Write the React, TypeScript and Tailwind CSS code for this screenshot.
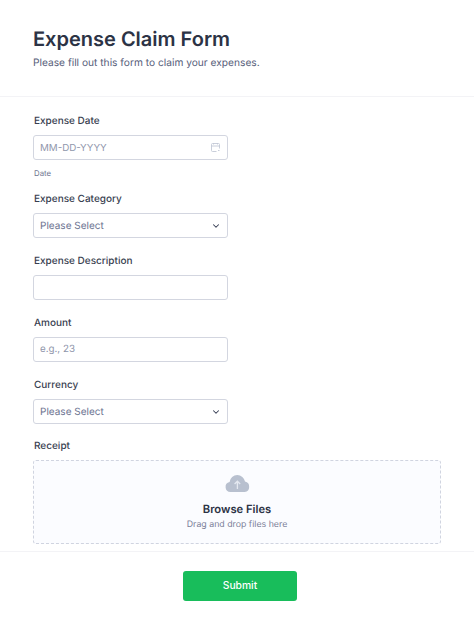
import { ChevronDown } from "lucide-react";

function Label({ text }: { text: string }) {
  return <p className="h-[18px] pl-px text-[10px] leading-[20px] font-medium text-[#383e50]">{text}</p>;
}

function Field({ text }: { text?: string }) {
  return (
    <div className="mt-[6px] flex h-[25px] w-[195px] items-center rounded-[3px] border border-[#d3d6e0] bg-white px-[6px] pt-[2px]">
      <span className="text-[9.8px] text-[#8f96ab]">{text}</span>
    </div>
  );
}

function SelectField() {
  return (
    <div className="mt-[6px] flex h-[25px] w-[195px] items-center justify-between rounded-[3px] border border-[#d3d6e0] bg-white pl-[6px] pr-[6px]">
      <span className="pt-[2px] text-[10px] text-[#6c7390]">Please Select</span>
      <ChevronDown className="h-[10px] w-[10px] text-[#343c52]" strokeWidth={2.5} />
    </div>
  );
}

export default function App() {
  return (
    <div className="h-[626px] w-[474px] overflow-hidden bg-white font-['Inter',sans-serif] [text-rendering:geometricPrecision]">
      <header className="h-[97px] border-b border-[#f3f3f6] pl-[33px] pt-[26px]">
        <h1 className="text-[20px] leading-[27px] font-semibold text-[#2c3345]">Expense Claim Form</h1>
        <p className="mt-[2px] text-[10.2px] leading-[16px] text-[#57607a]">Please fill out this form to claim your expenses.</p>
      </header>

      <main className="pl-[33px] pt-[14px]">
        <Label text="Expense Date" />
        <div className="mt-[6px] flex h-[25px] w-[195px] items-center justify-between rounded-[3px] border border-[#d3d6e0] bg-white pl-[6px] pr-[7px]">
          <span className="pt-[3px] text-[9.8px] text-[#8f96ab]">MM-DD-YYYY</span>
          <svg width="9" height="9" viewBox="0 0 9 9" fill="none" stroke="#c3c8d6" strokeWidth="0.9">
            <path d="M5.5 8.5H1.5a1 1 0 0 1-1-1V1.5a1 1 0 0 1 1-1h6a1 1 0 0 1 1 1V5.5" />
            <path d="M.5 3h8M2.5 0v1.5M6.5 0v1.5M7 7.5h1.5" />
          </svg>
        </div>
        <p className="mt-[7px] h-[12px] pl-px text-[7.8px] leading-[12px] text-[#6f7690]">Date</p>

        <div className="mt-[10px]">
          <Label text="Expense Category" />
          <SelectField />
        </div>

        <div className="mt-[13px]">
          <Label text="Expense Description" />
          <Field />
        </div>

        <div className="mt-[13px]">
          <Label text="Amount" />
          <Field text="e.g., 23" />
        </div>

        <div className="mt-[13px]">
          <Label text="Currency" />
          <SelectField />
        </div>

        <div className="mt-[12px]">
          <Label text="Receipt" />
          <div className="mt-[6px] flex h-[84px] w-[408px] flex-col items-center rounded-[3px] border border-dashed border-[#d0d4e0] bg-[#fbfcff] pt-[14px]">
            <svg width="25" height="17" viewBox="0 0 25 17">
              <path d="M5.5 17A5 5 0 0 1 4.6 7.1 8 8 0 0 1 12.3 0a8 8 0 0 1 7.7 6.6A5.3 5.3 0 0 1 19.8 17Z" fill="#b8c0cf" />
              <path d="M12.4 14V6.5M9.6 9l2.8-2.8L15.2 9" fill="none" stroke="#e4e8f0" strokeWidth="1.3" />
            </svg>
            <p className="mt-[9px] text-[11.2px] leading-[16px] font-semibold text-[#2c3345]">Browse Files</p>
            <p className="mt-[1px] text-[8.8px] leading-[14px] text-[#7b8199]">Drag and drop files here</p>
          </div>
        </div>
      </main>

      <footer className="mt-[7px] flex justify-center border-t border-[#f3f3f6] pl-[6px] pt-[19px]">
        <button className="h-[30px] w-[114px] rounded-[3px] bg-[#18bd5b] text-[10.3px] font-medium text-white">Submit</button>
      </footer>
    </div>
  );
}
